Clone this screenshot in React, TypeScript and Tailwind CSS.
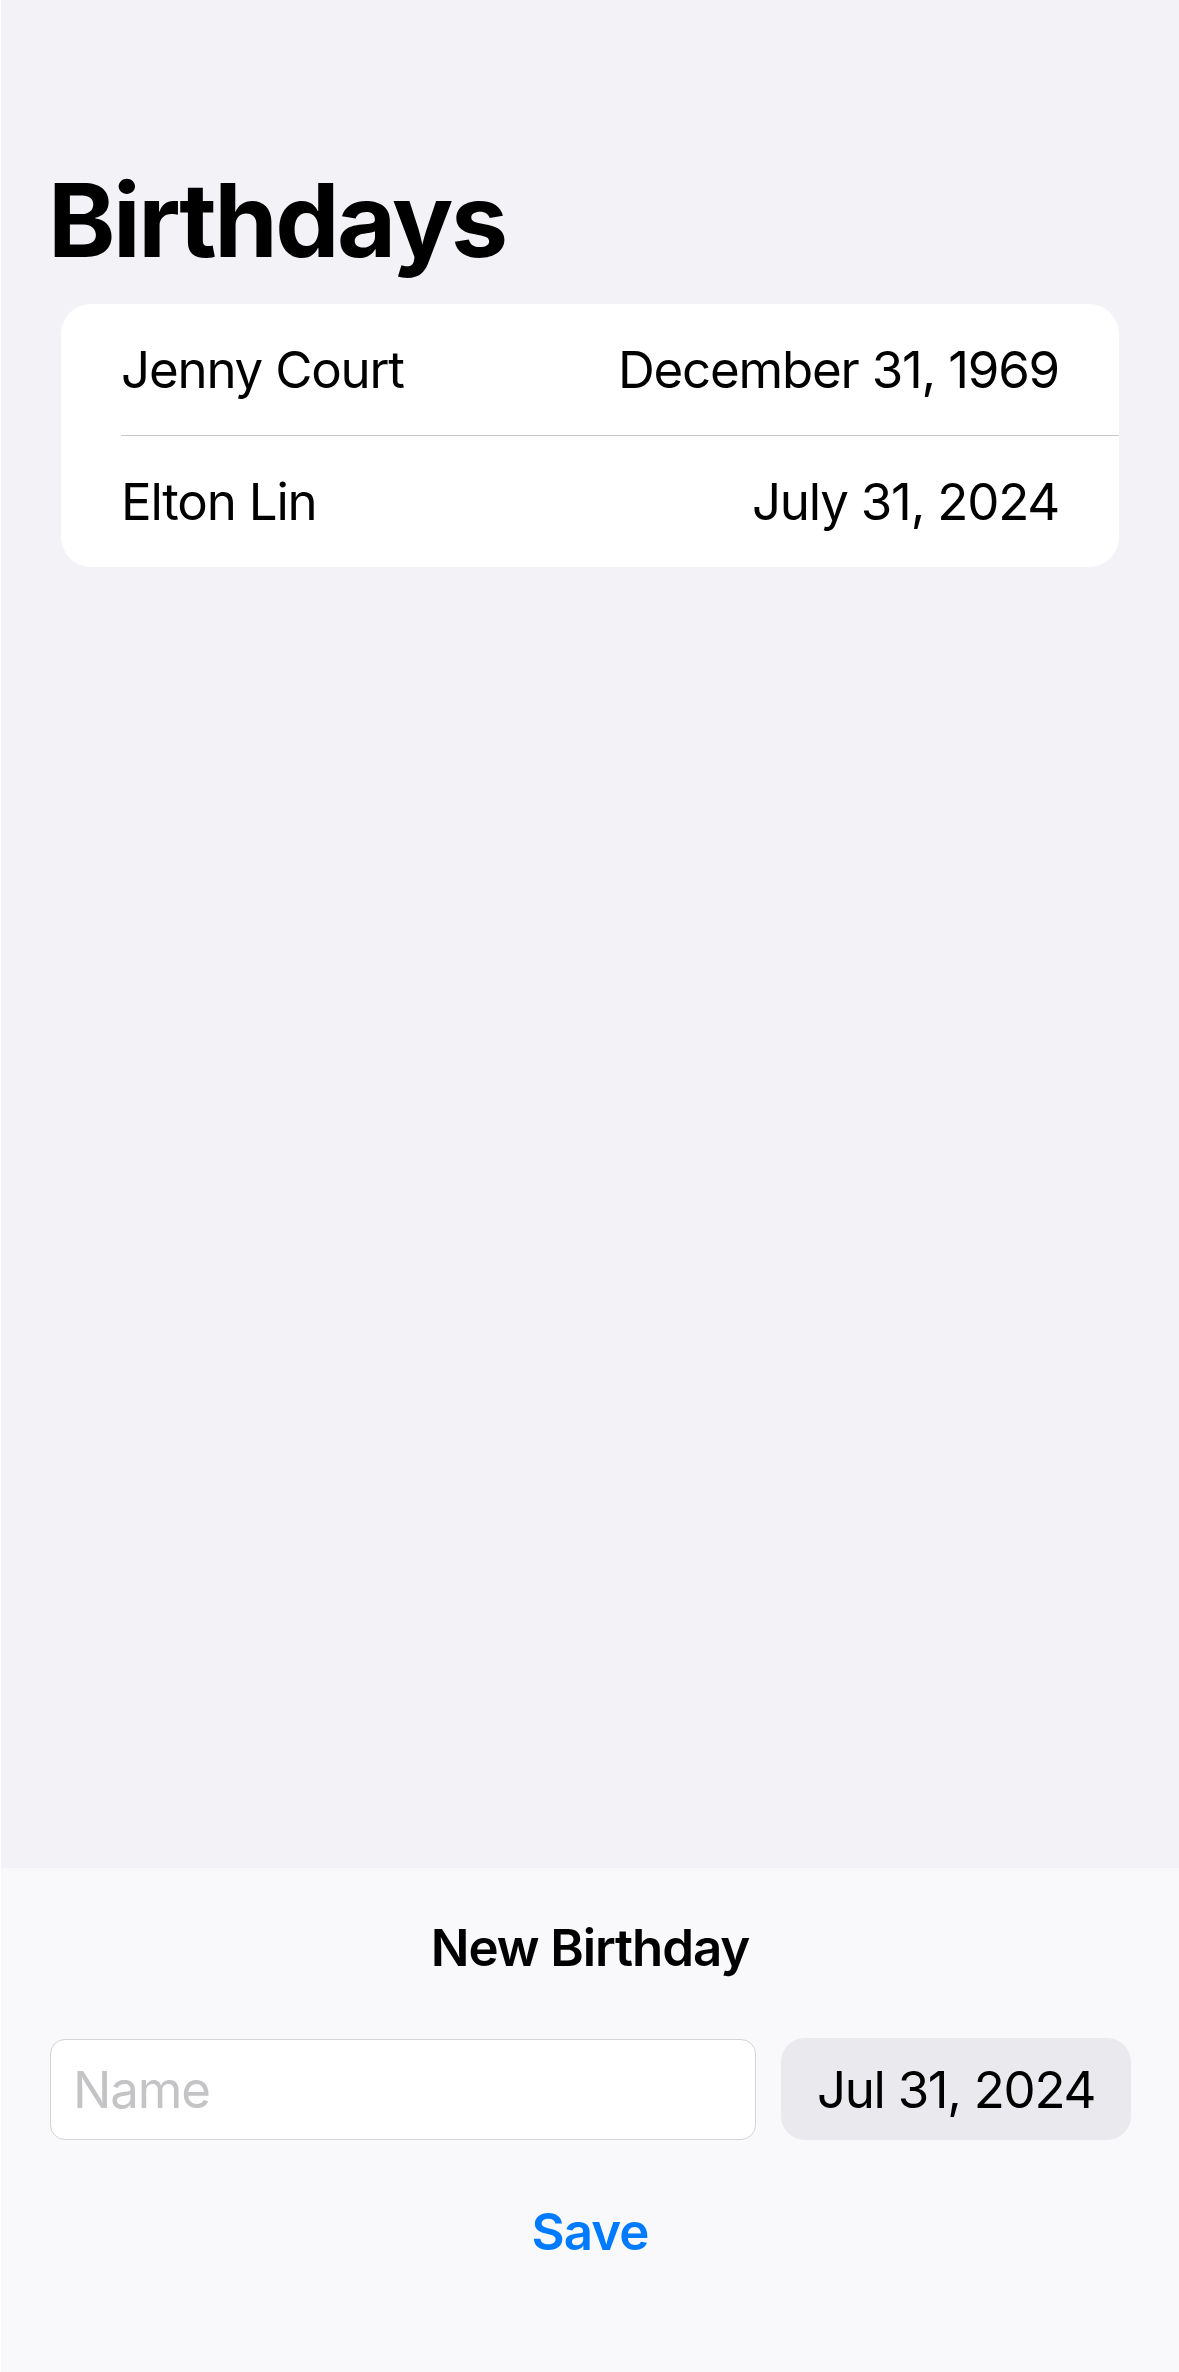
const rows = [
  { name: 'Jenny Court', date: 'December 31, 1969' },
  { name: 'Elton Lin', date: 'July 31, 2024' },
]

export default function App() {
  return (
    <div
      className="flex h-[2372px] w-[1179px] flex-col overflow-hidden border-l border-white bg-[#f2f2f7] text-black"
      style={{ fontFamily: 'Inter, "Noto Sans", sans-serif' }}
    >
      {/* Large title + inset grouped list */}
      <div className="flex flex-1 flex-col">
        <h1 className="mt-[169px] pl-[47px] text-[102px] font-bold leading-none tracking-[-2.5px]">
          Birthdays
        </h1>
        <div className="mx-[60px] mt-[33px] overflow-hidden rounded-[30px] bg-white">
          {rows.map((row, i) => (
            <div key={row.name}>
              {i > 0 && <div className="ml-[60px] h-px bg-[#c8c8cc]" />}
              <div className="flex h-[131px] items-center justify-between px-[60px] text-[51px] leading-none tracking-[-1.2px]">
                <span>{row.name}</span>
                <span>{row.date}</span>
              </div>
            </div>
          ))}
        </div>
      </div>

      {/* Bottom sheet */}
      <div className="flex h-[504px] flex-col items-center bg-[#f9f9fb] pt-[54px]">
        <div className="text-[51px] font-semibold leading-none tracking-[-1.1px]">
          New Birthday
        </div>
        <div className="mt-[65px] flex w-full items-center gap-[25px] pl-[49px] pr-[48px]">
          <div className="flex h-[101px] flex-1 items-center rounded-[15px] border border-[#d4d4d8] bg-white px-[22px] text-[51px] leading-none tracking-[-1.2px] text-[#c4c4c7]">
            Name
          </div>
          <div className="flex h-[102px] w-[350px] items-center justify-center rounded-[24px] bg-[#e9e9ee] text-[51px] leading-none tracking-[-1.3px]">
            Jul 31, 2024
          </div>
        </div>
        <button className="mt-[66px] text-[51px] font-semibold leading-none tracking-[-1px] text-[#007aff]">
          Save
        </button>
      </div>
    </div>
  )
}
